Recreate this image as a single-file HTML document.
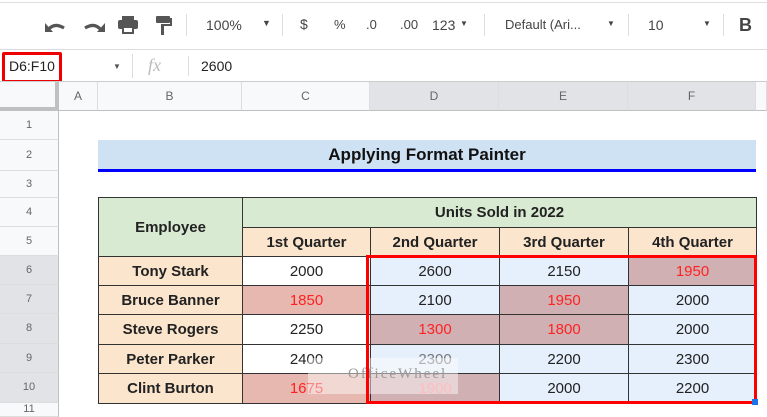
<!DOCTYPE html>
<html><head><style>
body{margin:0;width:767px;height:416px;overflow:hidden;background:#fff;font-family:"Liberation Sans",Arial,sans-serif;position:relative}
.a{position:absolute}
.tb{color:#444;font-size:14px}
.rh{position:absolute;left:0;width:58px;text-align:center;color:#666;font-size:11px;background:#f8f9fa;border-bottom:1px solid #ddd;border-right:1px solid #c0c0c0}
.ch{position:absolute;top:82px;height:29px;line-height:29px;text-align:center;color:#666;font-size:12px;background:#f8f9fa;border-right:1px solid #ddd;border-bottom:1px solid #c0c0c0;box-sizing:border-box}
.c{position:absolute;box-sizing:border-box;border:1px solid #333;text-align:center;font-size:15px;color:#222;display:flex;align-items:center;justify-content:center}
.b{font-weight:bold}
.g{background:#d9ead3}.p{background:#fce5cd}.r{background:#e6b8af;color:#f22}
.s{background:#e6effc}.sr{background:#d0b0b2;color:#f22}
</style></head><body>
<div class="a" style="left:0;top:2px;width:767px;height:1px;background:#ddd"></div>
<svg class="a" style="left:40px;top:12px" width="140" height="26" viewBox="0 0 140 26">
<path d="M8 18 Q14 10 24 16" stroke="#555" stroke-width="3.2" fill="none"/><path d="M5 11 L5 20 L13 20 Z" fill="#555"/>
<path d="M62 18 Q56 10 46 16" stroke="#555" stroke-width="3.2" fill="none" transform="translate(-1,0) scale(1,1)"/><path d="M65 11 L65 20 L57 20 Z" fill="#555"/>
<rect x="82" y="4" width="12" height="4" fill="#555"/><rect x="78" y="8" width="20" height="9" rx="2" fill="#555"/><rect x="82" y="15" width="12" height="7" fill="#555"/><rect x="84" y="16" width="8" height="4" fill="#fff"/>
<rect x="116" y="4" width="14" height="7" rx="1" fill="#555"/><rect x="130" y="6" width="2" height="7" fill="#555"/><rect x="121" y="12" width="11" height="2" fill="#555"/><rect x="121" y="12" width="3" height="11" fill="#555"/>
</svg>
<div class="a" style="left:186px;top:14px;width:1px;height:22px;background:#ddd"></div>
<div class="a tb" style="left:206px;top:17px">100%</div><div class="a tb" style="left:262px;top:18px;font-size:9px">▼</div>
<div class="a" style="left:282px;top:14px;width:1px;height:22px;background:#ddd"></div>
<div class="a tb" style="left:300px;top:16px">$</div><div class="a tb" style="left:334px;top:17px;font-size:13px">%</div>
<div class="a tb" style="left:366px;top:17px;font-size:13px">.0</div><div class="a tb" style="left:400px;top:17px;font-size:13px">.00</div>
<div class="a tb" style="left:432px;top:17px">123</div><div class="a tb" style="left:460px;top:19px;font-size:8px">▼</div>
<div class="a" style="left:484px;top:14px;width:1px;height:22px;background:#ddd"></div>
<div class="a tb" style="left:505px;top:17px;font-size:13px">Default (Ari...</div><div class="a tb" style="left:607px;top:19px;font-size:8px">▼</div>
<div class="a" style="left:628px;top:14px;width:1px;height:22px;background:#ddd"></div>
<div class="a tb" style="left:648px;top:17px">10</div><div class="a tb" style="left:703px;top:19px;font-size:8px">▼</div>
<div class="a" style="left:723px;top:14px;width:1px;height:22px;background:#ddd"></div>
<div class="a tb" style="left:739px;top:15px;font-size:18px;font-weight:bold">B</div>
<div class="a" style="left:0;top:49px;width:767px;height:1px;background:#ddd"></div>
<div class="a" style="left:2px;top:52px;width:54px;height:25px;border:3px solid #e00;border-radius:2px"></div>
<div class="a" style="left:9px;top:58px;font-size:14px;color:#222">D6:F10</div>
<div class="a" style="left:113px;top:62px;font-size:8px;color:#555">▼</div>
<div class="a" style="left:132px;top:54px;width:1px;height:24px;background:#ddd"></div>
<div class="a" style="left:148px;top:55px;font-size:18px;font-style:italic;color:#bbb;font-family:'Liberation Serif',serif">fx</div>
<div class="a" style="left:188px;top:56px;width:1px;height:20px;background:#ddd"></div>
<div class="a" style="left:201px;top:58px;font-size:14px;color:#222">2600</div>
<div class="a" style="left:0;top:81px;width:767px;height:1px;background:#ccc"></div>
<div class="a" style="left:0;top:82px;width:59px;height:29px;background:#f8f9fa;border-right:4px solid #c0c0c0;border-bottom:4px solid #c0c0c0;box-sizing:border-box"></div>
<div class="ch" style="left:59px;width:39px">A</div>
<div class="ch" style="left:98px;width:144px">B</div>
<div class="ch" style="left:242px;width:128px">C</div>
<div class="ch" style="left:370px;width:129px;background:#e1e3e6">D</div>
<div class="ch" style="left:499px;width:129px;background:#e1e3e6">E</div>
<div class="ch" style="left:628px;width:128px;background:#e1e3e6">F</div>
<div class="ch" style="left:756px;width:11px"></div>
<div class="rh" style="top:111px;height:28px;line-height:28px">1</div>
<div class="rh" style="top:140px;height:30px;line-height:30px">2</div>
<div class="rh" style="top:171px;height:26px;line-height:26px">3</div>
<div class="rh" style="top:198px;height:28px;line-height:28px">4</div>
<div class="rh" style="top:227px;height:28px;line-height:28px">5</div>
<div class="rh" style="top:256px;height:28px;line-height:28px;background:#e1e3e6">6</div>
<div class="rh" style="top:285px;height:28px;line-height:28px;background:#e1e3e6">7</div>
<div class="rh" style="top:314px;height:29px;line-height:29px;background:#e1e3e6">8</div>
<div class="rh" style="top:344px;height:28px;line-height:28px;background:#e1e3e6">9</div>
<div class="rh" style="top:373px;height:29px;line-height:29px;background:#e1e3e6">10</div>
<div class="rh" style="top:403px;height:13px;line-height:13px">11</div>
<div class="a" style="left:98px;top:140px;width:658px;height:29px;background:#cfe2f3;text-align:center;line-height:29px;font-weight:bold;font-size:17px;color:#111">Applying Format Painter</div>
<div class="a" style="left:98px;top:169px;width:658px;height:3px;background:#00f"></div>
<div class="c g b" style="left:98px;top:197px;width:145px;height:60px">Employee</div>
<div class="c g b" style="left:242px;top:197px;width:515px;height:31px">Units Sold in 2022</div>
<div class="c p b" style="left:242px;top:227px;width:129px;height:30px">1st Quarter</div>
<div class="c p b" style="left:370px;top:227px;width:130px;height:30px">2nd Quarter</div>
<div class="c p b" style="left:499px;top:227px;width:130px;height:30px">3rd Quarter</div>
<div class="c p b" style="left:628px;top:227px;width:129px;height:30px">4th Quarter</div>
<div class="c p b" style="left:98px;top:256px;width:145px;height:30px">Tony Stark</div>
<div class="c p b" style="left:98px;top:285px;width:145px;height:30px">Bruce Banner</div>
<div class="c p b" style="left:98px;top:314px;width:145px;height:31px">Steve Rogers</div>
<div class="c p b" style="left:98px;top:344px;width:145px;height:30px">Peter Parker</div>
<div class="c p b" style="left:98px;top:373px;width:145px;height:31px">Clint Burton</div>
<div class="c" style="left:242px;top:256px;width:129px;height:30px">2000</div>
<div class="c r" style="left:242px;top:285px;width:129px;height:30px">1850</div>
<div class="c" style="left:242px;top:314px;width:129px;height:31px">2250</div>
<div class="c" style="left:242px;top:344px;width:129px;height:30px">2400</div>
<div class="c r" style="left:242px;top:373px;width:129px;height:31px">1675</div>
<div class="c s" style="left:370px;top:256px;width:130px;height:30px;border-color:#1a73e8 #333 #1a73e8 #333">2600</div>
<div class="c s" style="left:370px;top:285px;width:130px;height:30px">2100</div>
<div class="c sr" style="left:370px;top:314px;width:130px;height:31px">1300</div>
<div class="c s" style="left:370px;top:344px;width:130px;height:30px;color:#777">2300</div>
<div class="c sr" style="left:370px;top:373px;width:130px;height:31px;color:#f88">1900</div>
<div class="c s" style="left:499px;top:256px;width:130px;height:30px">2150</div>
<div class="c sr" style="left:499px;top:285px;width:130px;height:30px">1950</div>
<div class="c sr" style="left:499px;top:314px;width:130px;height:31px">1800</div>
<div class="c s" style="left:499px;top:344px;width:130px;height:30px">2200</div>
<div class="c s" style="left:499px;top:373px;width:130px;height:31px">2000</div>
<div class="c sr" style="left:628px;top:256px;width:129px;height:30px">1950</div>
<div class="c s" style="left:628px;top:285px;width:129px;height:30px">2000</div>
<div class="c s" style="left:628px;top:314px;width:129px;height:31px">2000</div>
<div class="c s" style="left:628px;top:344px;width:129px;height:30px">2300</div>
<div class="c s" style="left:628px;top:373px;width:129px;height:31px">2200</div>
<div class="a" style="left:308px;top:358px;width:150px;height:36px;background:rgba(255,255,255,.45)"></div>
<div class="a" style="left:348px;top:366px;font-family:'Liberation Serif',serif;font-size:15px;letter-spacing:2px;color:#999">OfficeWheel</div>
<div class="a" style="left:366px;top:255px;width:385px;height:143px;border:3px solid #f00"></div>
<div class="a" style="left:752px;top:399px;width:6px;height:6px;background:#1a73e8"></div>
</body></html>
